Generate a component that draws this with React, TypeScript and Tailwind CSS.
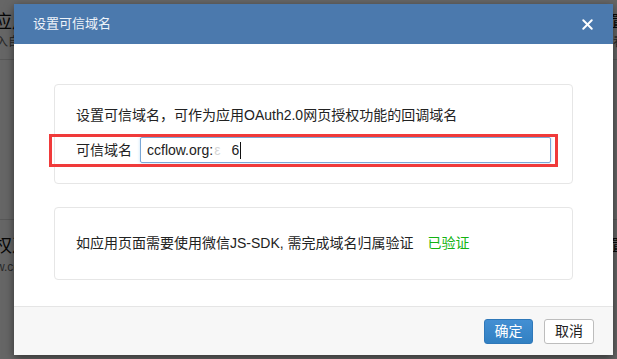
import { X } from 'lucide-react'

const font = { fontFamily: '"Liberation Sans", "Noto Sans CJK SC", sans-serif' }

function BackgroundPage() {
  return (
    <div className="flex h-full flex-col bg-white text-[#111]">
      <div className="flex h-[60px] flex-col justify-start border-b border-[#ddd] pt-[11px]">
        <div className="flex justify-between">
          <span className="-ml-[6px] text-[18px] leading-[22px]">应用</span>
          <span className="-mr-[10px] text-[16px] leading-[22px]">设置</span>
        </div>
        <div className="flex justify-between">
          <span className="-ml-[4px] text-[12px] leading-[18px] text-[#666]">入自定义</span>
          <span className="-mr-[8px] text-[12px] leading-[18px] text-[#666]">查看</span>
        </div>
      </div>
      <div className="h-[160px] border-b border-[#ddd]" />
      <div className="flex flex-col pt-[14px]">
        <div className="flex justify-between">
          <span className="-ml-[6px] text-[18px] leading-[24px]">权及</span>
          <span className="-mr-[10px] text-[16px] leading-[24px]">设置</span>
        </div>
        <span className="-ml-[4px] text-[12px] leading-[18px] text-[#666]">w.ccflow</span>
      </div>
    </div>
  )
}

function DomainRow() {
  return (
    <div className="relative mt-[12px] flex items-center">
      <span className="w-[64px] shrink-0 text-[14px] leading-[26px] text-[#222]">可信域名</span>
      <div className="flex h-[26px] flex-1 items-center rounded-[2px] border border-[#7aa7d6] pl-[6px] text-[14px] text-[#222] shadow-[0_0_3px_rgba(102,175,233,0.45)]">
        <span>ccflow.org:</span>
        <span className="ml-[1px] text-[#d6d6d6]">ε</span>
        <span className="inline-block w-[11px]" />
        <span>6</span>
        <span className="ml-[1px] inline-block h-[17px] w-px bg-[#111]" />
      </div>
      <div className="pointer-events-none absolute -bottom-[4px] -left-[27px] -right-[7px] -top-[3px] border-[3px] border-[#f03a3a]" />
    </div>
  )
}

export default function App() {
  return (
    <div className="relative h-[359px] w-[617px] overflow-hidden" style={font}>
      <BackgroundPage />
      <div className="absolute inset-0 bg-black/[0.6]" />

      <div className="absolute left-[14px] top-[4px] flex w-[599px] flex-col bg-white shadow-[0_3px_9px_rgba(0,0,0,0.5)]">
        <div className="flex h-[40px] items-center justify-between bg-[#4b79ad] pl-[19px] pr-[17px]">
          <span className="text-[13px] text-[#eef3f9]">设置可信域名</span>
          <X size={17} strokeWidth={2.8} className="text-white" />
        </div>

        <div className="flex flex-col gap-[23px] px-[40px] pb-[26px] pt-[40px]">
          <div className="flex h-[100px] flex-col rounded-[4px] border border-[#e6e6e6] px-[21px] pt-[20px]">
            <p className="text-[14px] leading-[20px] text-[#222]">
              设置可信域名，可作为应用OAuth2.0网页授权功能的回调域名
            </p>
            <DomainRow />
          </div>

          <div className="flex h-[73px] items-center rounded-[4px] border border-[#e6e6e6] px-[21px]">
            <span className="text-[14px] text-[#222]">如应用页面需要使用微信JS-SDK, 需完成域名归属验证</span>
            <span className="ml-[14px] text-[14px] text-[#12b312]">已验证</span>
          </div>
        </div>

        <div className="flex h-[49px] items-center justify-end gap-[11px] border-t border-[#e5e5e5] bg-[#f7f7f7] pr-[19px]">
          <button
            type="button"
            className="h-[25px] w-[49px] rounded-[3px] border border-[#2f78b9] bg-gradient-to-b from-[#438fd3] to-[#3180c2] text-[14px] text-white"
          >
            确定
          </button>
          <button
            type="button"
            className="h-[25px] w-[50px] rounded-[3px] border border-[#bdbdbd] bg-white text-[14px] text-[#222]"
          >
            取消
          </button>
        </div>
      </div>
    </div>
  )
}
